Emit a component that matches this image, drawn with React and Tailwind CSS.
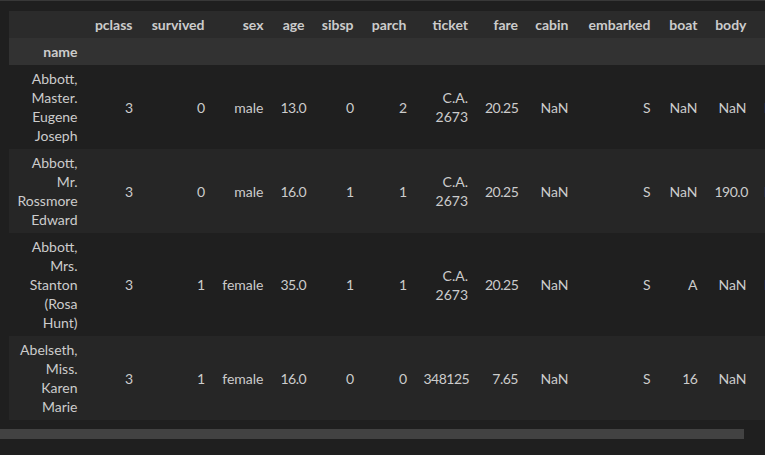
const columns = [
  { key: "pclass", w: "w-[55px]" },
  { key: "survived", w: "w-[72px]" },
  { key: "sex", w: "w-[59px]" },
  { key: "age", w: "w-[41px]" },
  { key: "sibsp", w: "w-[49px]" },
  { key: "parch", w: "w-[53px]" },
  { key: "ticket", w: "w-[61.5px]" },
  { key: "fare", w: "w-[50px]" },
  { key: "cabin", w: "w-[50.5px]" },
  { key: "embarked", w: "w-[82px]" },
  { key: "boat", w: "w-[47px]" },
  { key: "body", w: "w-[49px]" },
  { key: "home.dest", w: "w-[89px]" },
];

const rows = [
  {
    name: "Abbott, Master. Eugene Joseph",
    values: ["3", "0", "male", "13.0", "0", "2", "C.A. 2673", "20.25", "NaN", "S", "NaN", "NaN", "East Providence, RI"],
  },
  {
    name: "Abbott, Mr. Rossmore Edward",
    values: ["3", "0", "male", "16.0", "1", "1", "C.A. 2673", "20.25", "NaN", "S", "NaN", "190.0", "East Providence, RI"],
  },
  {
    name: "Abbott, Mrs. Stanton (Rosa Hunt)",
    values: ["3", "1", "female", "35.0", "1", "1", "C.A. 2673", "20.25", "NaN", "S", "A", "NaN", "East Providence, RI"],
  },
  {
    name: "Abelseth, Miss. Karen Marie",
    values: ["3", "1", "female", "16.0", "0", "0", "348125", "7.65", "NaN", "S", "16", "NaN", "Norway Los Angeles, CA"],
  },
];

const isNumber = (v) => /^[\d.]+$/.test(v);

export default function App() {
  return (
    <div className="w-[765px] h-[455px] overflow-hidden bg-[#1f1f1f] border-t border-[#383838] font-[Lato,sans-serif] text-[14px] leading-[19px] text-[#cccccc]">
      <div className="pt-[10px] pl-[9px] overflow-hidden">
        <table className="table-fixed w-[835px] border-collapse text-right">
          <thead>
            <tr className="bg-[#2b2b2b]">
              <th className="w-[77px] px-[8.5px] py-1"></th>
              {columns.map((c) => (
                <th key={c.key} className={`${c.w} px-[8.5px] py-1 font-bold`}>
                  {c.key}
                </th>
              ))}
            </tr>
            <tr className="bg-[#323232]">
              <th className="px-[8.5px] py-1 font-bold">name</th>
              {columns.map((c) => (
                <th key={c.key} className="px-[8.5px] py-1"></th>
              ))}
            </tr>
          </thead>
          <tbody>
            {rows.map((r, i) => (
              <tr key={r.name} className={i % 2 === 1 ? "bg-[#262626]" : "bg-[#1f1f1f]"}>
                <th className="px-[8.5px] py-1 font-normal align-middle">{r.name}</th>
                {r.values.map((v, j) => (
                  <td
                    key={j}
                    className={`px-[8.5px] py-1 align-middle ${isNumber(v) ? "tracking-[-0.5px]" : ""}`}
                  >
                    {v}
                  </td>
                ))}
              </tr>
            ))}
          </tbody>
        </table>
      </div>
      <div className="mt-[9px] h-[10px] w-[744px] bg-[#424242]"></div>
    </div>
  );
}
